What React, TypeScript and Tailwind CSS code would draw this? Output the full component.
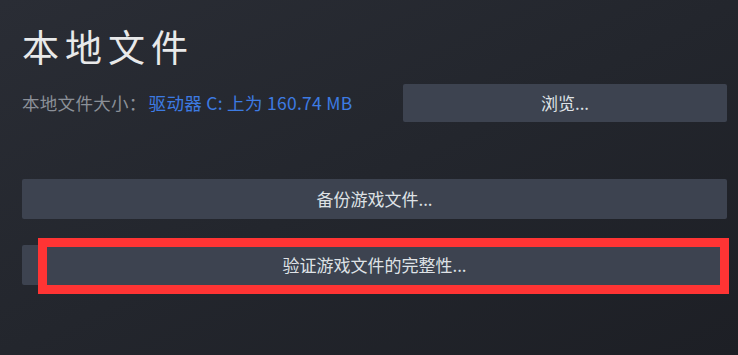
export default function App() {
  const font = { fontFamily: '"Noto Sans CJK SC", "Noto Sans", sans-serif' };
  return (
    <main
      className="relative w-[738px] h-[355px] overflow-hidden bg-gradient-to-br from-[#2a2d35] via-[#23262d] to-[#1d1f25] pl-[22px] pr-[11px] pt-[20px]"
      style={font}
    >
      <h1 className="text-[37px] leading-[52px] tracking-[6px] text-[#e8e9ea] font-normal">
        本地文件
      </h1>

      <div className="flex items-center justify-between mt-[12px]">
        <p className="text-[17.5px] text-[#8b9098] tracking-[0.3px]">
          本地文件大小：
          <span className="text-[#3d7be3] ml-[2px]">驱动器 C: 上为 160.74 MB</span>
        </p>
        <button className="w-[324px] h-[38px] bg-[#3d4350] rounded-[2px] text-[17px] text-[#dfe2e6]">
          浏览...
        </button>
      </div>

      <button className="mt-[57px] w-full h-[40px] bg-[#3d4350] rounded-[2px] text-[17px] text-[#dfe2e6]">
        备份游戏文件...
      </button>

      <button className="mt-[26px] w-full h-[40px] bg-[#3d4350] rounded-[2px] text-[17px] text-[#dfe2e6]">
        验证游戏文件的完整性...
      </button>

      {/* annotation box */}
      <div className="absolute left-[38px] top-[238px] w-[691px] h-[56px] border-[9px] border-[#ff3434] pointer-events-none" />
    </main>
  );
}
